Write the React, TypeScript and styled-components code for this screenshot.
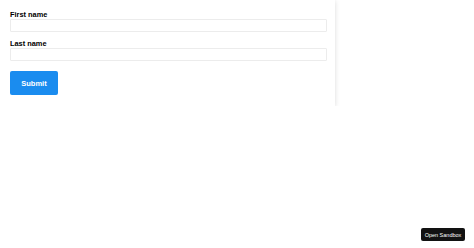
import React from "react";
import styled, { createGlobalStyle } from "styled-components";

const Global = createGlobalStyle`
  html, body { margin: 0; padding: 0; background: #fff; }
  body { font-family: "Liberation Sans", Arial, sans-serif; }
  * { box-sizing: border-box; }
`;

const Card = styled.form`
  width: 335px;
  padding: 10px 8px 11px 10px;
  background: #fff;
  box-shadow: 0 1px 5px rgba(0, 0, 0, 0.15);
  display: flex;
  flex-direction: column;
`;

const Field = styled.div<{ $gap?: number }>`
  display: flex;
  flex-direction: column;
  margin-bottom: ${(p) => p.$gap ?? 0}px;
`;

const Label = styled.label`
  font-size: 7.4px;
  line-height: 9px;
  font-weight: 700;
  color: #000;
`;

const Input = styled.input`
  width: 317px;
  height: 13px;
  border: 1px solid #ececec;
  border-radius: 1px;
  background: #fff;
  padding: 0 3px;
  font-size: 7px;
  outline: none;
`;

const Button = styled.button`
  align-self: flex-start;
  width: 48px;
  height: 24px;
  border: none;
  border-radius: 2px;
  background: #1a8cef;
  color: #fff;
  font-family: "Liberation Sans", Arial, sans-serif;
  font-weight: 700;
  font-size: 7.5px;
  padding: 0;
`;

const Sandbox = styled.div`
  position: fixed;
  right: 9px;
  bottom: 7px;
  width: 44px;
  height: 13px;
  background: #121212;
  color: #fff;
  border-radius: 2px;
  font-family: "Liberation Sans", Arial, sans-serif;
  font-size: 5.5px;
  display: flex;
  align-items: center;
  justify-content: center;
`;

export default function App() {
  return (
    <>
      <Global />
      <Card onSubmit={(e) => e.preventDefault()}>
        <Field $gap={7}>
          <Label>First name</Label>
          <Input />
        </Field>
        <Field $gap={10}>
          <Label>Last name</Label>
          <Input />
        </Field>
        <Button type="submit">Submit</Button>
      </Card>
      <Sandbox>Open Sandbox</Sandbox>
    </>
  );
}
